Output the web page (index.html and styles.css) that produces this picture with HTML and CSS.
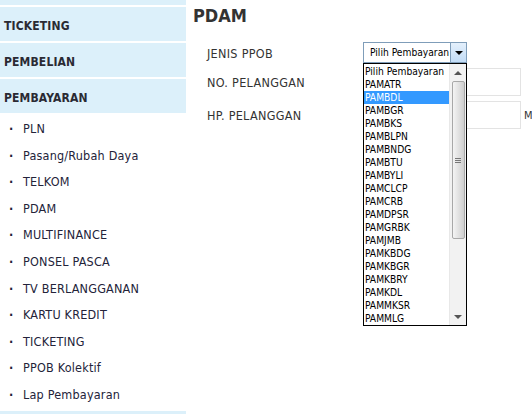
FILE: index.html
```html
<!DOCTYPE html>
<html>
<head>
<meta charset="utf-8">
<link rel="stylesheet" href="styles.css">
</head>
<body>
<div class="page">
  <aside class="sidebar">
    <div class="bar bar-top"></div>
    <div class="bar">TICKETING</div>
    <div class="bar">PEMBELIAN</div>
    <div class="bar">PEMBAYARAN</div>
    <ul class="submenu">
      <li>PLN</li>
      <li>Pasang/Rubah Daya</li>
      <li>TELKOM</li>
      <li>PDAM</li>
      <li>MULTIFINANCE</li>
      <li>PONSEL PASCA</li>
      <li>TV BERLANGGANAN</li>
      <li>KARTU KREDIT</li>
      <li>TICKETING</li>
      <li>PPOB Kolektif</li>
      <li>Lap Pembayaran</li>
    </ul>
    <div class="bar bar-bottom"></div>
  </aside>
  <main class="content">
    <h1 class="title">PDAM</h1>
    <div class="form">
      <div class="label">JENIS PPOB</div>
      <div class="field">
        <div class="select">
          <span class="select-text">Pilih Pembayaran</span>
          <span class="select-btn"><span class="tri-down"></span></span>
          <div class="options">
            <ul class="option-list">
              <li>Pilih Pembayaran</li>
              <li>PAMATR</li>
              <li class="selected">PAMBDL</li>
              <li>PAMBGR</li>
              <li>PAMBKS</li>
              <li>PAMBLPN</li>
              <li>PAMBNDG</li>
              <li>PAMBTU</li>
              <li>PAMBYLI</li>
              <li>PAMCLCP</li>
              <li>PAMCRB</li>
              <li>PAMDPSR</li>
              <li>PAMGRBK</li>
              <li>PAMJMB</li>
              <li>PAMKBDG</li>
              <li>PAMKBGR</li>
              <li>PAMKBRY</li>
              <li>PAMKDL</li>
              <li>PAMMKSR</li>
              <li>PAMMLG</li>
            </ul>
            <div class="scrollbar">
              <span class="sb-arrow sb-up"></span>
              <span class="sb-thumb"><span class="grip"></span></span>
              <span class="sb-space"></span>
              <span class="sb-arrow sb-down"></span>
            </div>
          </div>
        </div>
      </div>
      <div class="label">NO. PELANGGAN</div>
      <div class="field"><div class="input"></div></div>
      <div class="label">HP. PELANGGAN</div>
      <div class="field"><div class="input"></div><span class="hint">M</span></div>
    </div>
  </main>
</div>
</body>
</html>
```
FILE: styles.css
```css
html, body {
  margin: 0;
  padding: 0;
  overflow: hidden;
  background: #fff;
}
body {
  font-family: "DejaVu Sans Condensed", "DejaVu Sans", sans-serif;
  color: #333;
  width: 532px;
  height: 414px;
}
.page {
  display: flex;
  align-items: flex-start;
}
.sidebar {
  width: 186px;
  flex: none;
}
.bar {
  background: #dcf0fa;
  height: 34px;
  margin-bottom: 2px;
  box-sizing: border-box;
  padding-left: 4px;
  padding-top: 2px;
  font-size: 12px;
  font-weight: bold;
  line-height: 34px;
  color: #2a2a33;
  letter-spacing: 0.15px;
}
.bar-top {
  height: 5px;
  padding: 0;
}
.bar-bottom {
  margin-top: 2px;
  height: 20px;
}
.submenu {
  list-style: none;
  margin: 0;
  padding: 1px 0 0 0;
}
.submenu li {
  display: flex;
  line-height: 26.6px;
  height: 26.6px;
  font-size: 12.5px;
  letter-spacing: 0.2px;
  color: #23233a;
  padding-left: 9px;
}
.submenu li::before {
  content: "\00B7";
  width: 14px;
  font-weight: bold;
}
.content {
  flex: 1;
  padding-left: 7px;
  min-width: 0;
}
.title {
  margin: 5px 0 0 0;
  font-size: 18px;
  line-height: 22px;
  font-weight: bold;
  color: #333;
}
.form {
  display: grid;
  grid-template-columns: 156px auto;
  row-gap: 5px;
  margin-top: 15px;
  margin-left: 14px;
  white-space: nowrap;
}
.label {
  font-size: 12.5px;
  letter-spacing: 0.3px;
  color: #333;
  display: flex;
  align-items: center;
  padding-top: 1px;
}
.field {
  display: flex;
  align-items: center;
}
.select {
  position: relative;
  width: 104px;
  height: 21px;
  box-sizing: border-box;
  border: 1px solid #7f9db9;
  display: flex;
  align-items: center;
  font-size: 10.2px;
  color: #000;
}
.select-text {
  flex: 1;
  padding-left: 6px;
}
.select-btn {
  width: 16px;
  height: 19px;
  box-sizing: border-box;
  border-left: 1px solid #7f9db9;
  background: linear-gradient(#e4f0fc, #c2dcf6);
  display: flex;
  align-items: center;
  justify-content: center;
}
.tri-down {
  width: 0;
  height: 0;
  border-left: 4px solid transparent;
  border-right: 4px solid transparent;
  border-top: 4px solid #000;
}
.options {
  position: absolute;
  left: -1px;
  top: 20px;
  width: 104px;
  height: 263px;
  box-sizing: border-box;
  border: 1px solid #000;
  background: #fff;
  display: flex;
  z-index: 5;
}
.option-list {
  list-style: none;
  margin: 0;
  padding: 1px 0 0 0;
  flex: 1;
}
.option-list li {
  height: 13px;
  line-height: 13px;
  padding-left: 1px;
  font-size: 10.2px;
  color: #000;
}
.option-list li.selected {
  background: #3399ff;
  color: #fff;
}
.scrollbar {
  width: 16px;
  background: #f2f2f2;
  border-left: 1px solid #e8e8e8;
  display: flex;
  flex-direction: column;
  align-items: center;
}
.sb-arrow {
  height: 17px;
  width: 16px;
  display: flex;
  align-items: center;
  justify-content: center;
}
.sb-up::before {
  content: "";
  border-left: 4px solid transparent;
  border-right: 4px solid transparent;
  border-bottom: 4px solid #555;
}
.sb-down::before {
  content: "";
  border-left: 4px solid transparent;
  border-right: 4px solid transparent;
  border-top: 4px solid #555;
}
.sb-thumb {
  width: 13px;
  height: 158px;
  box-sizing: border-box;
  border: 1px solid #a8a8a8;
  border-radius: 2px;
  background: linear-gradient(90deg, #f4f4f4, #dedede 60%, #cfcfcf);
  display: flex;
  align-items: center;
  justify-content: center;
}
.grip {
  width: 6px;
  height: 5px;
  border-top: 1px solid #777;
  border-bottom: 1px solid #777;
  box-sizing: border-box;
  background: linear-gradient(#777, #777) 0 1px / 6px 1px no-repeat;
}
.sb-space {
  flex: 1;
}
.input {
  width: 158px;
  height: 28px;
  box-sizing: border-box;
  border: 1px solid #e3e3e3;
  background: #fff;
}
.hint {
  font-size: 11px;
  color: #333;
  margin-left: 3px;
}
```
